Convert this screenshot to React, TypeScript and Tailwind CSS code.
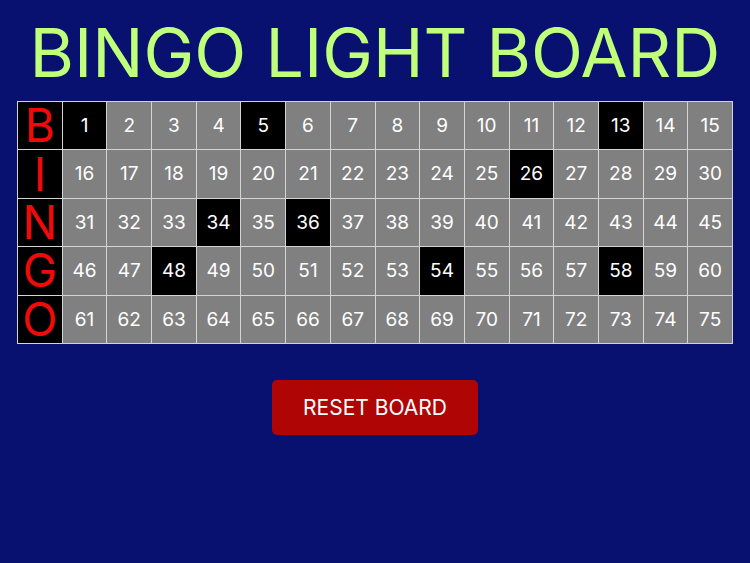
import { useState } from "react";

const LETTERS = ["B", "I", "N", "G", "O"];
const PER_ROW = 15;

interface NumberCellProps {
  value: number;
  called: boolean;
  onToggle: (value: number) => void;
}

function NumberCell({ value, called, onToggle }: NumberCellProps) {
  return (
    <td className={`border border-[#d4d4d4] p-0 ${called ? "bg-black" : "bg-[#808080]"}`}>
      <button
        type="button"
        aria-pressed={called}
        onClick={() => onToggle(value)}
        className="block h-[47px] w-full pt-px text-[19px] text-white"
      >
        {value}
      </button>
    </td>
  );
}

export default function App() {
  const [called, setCalled] = useState<number[]>([1, 5, 13, 26, 34, 36, 48, 54, 58]);

  const toggle = (value: number) => {
    setCalled(called.includes(value) ? called.filter(n => n !== value) : [...called, value]);
  };

  return (
    <main className="min-h-screen bg-[#081070] px-[17px] font-['Inter',sans-serif]">
      <h1 className="pt-2 text-center text-[68px] leading-[88px] whitespace-nowrap text-[#c0ff7a]">BINGO LIGHT BOARD</h1>
      <table className="mt-[5px] h-[243px] w-full table-fixed border-collapse">
        <tbody>
          {LETTERS.map((letter, row) => (
            <tr key={letter}>
              <th scope="row" className="border border-[#d4d4d4] bg-black p-0 text-[46px] leading-[47px] font-normal text-[#f00a0a]">
                {letter}
              </th>
              {Array.from({ length: PER_ROW }, (_, i) => row * PER_ROW + i + 1).map(n => (
                <NumberCell key={n} value={n} called={called.includes(n)} onToggle={toggle} />
              ))}
            </tr>
          ))}
        </tbody>
      </table>
      <div className="mt-9 flex justify-center">
        <button type="button" onClick={() => setCalled([])} className="rounded-[5px] bg-[#b00505] px-[31px] py-3 text-[21px] leading-[31px] text-white">
          RESET BOARD
        </button>
      </div>
    </main>
  );
}
